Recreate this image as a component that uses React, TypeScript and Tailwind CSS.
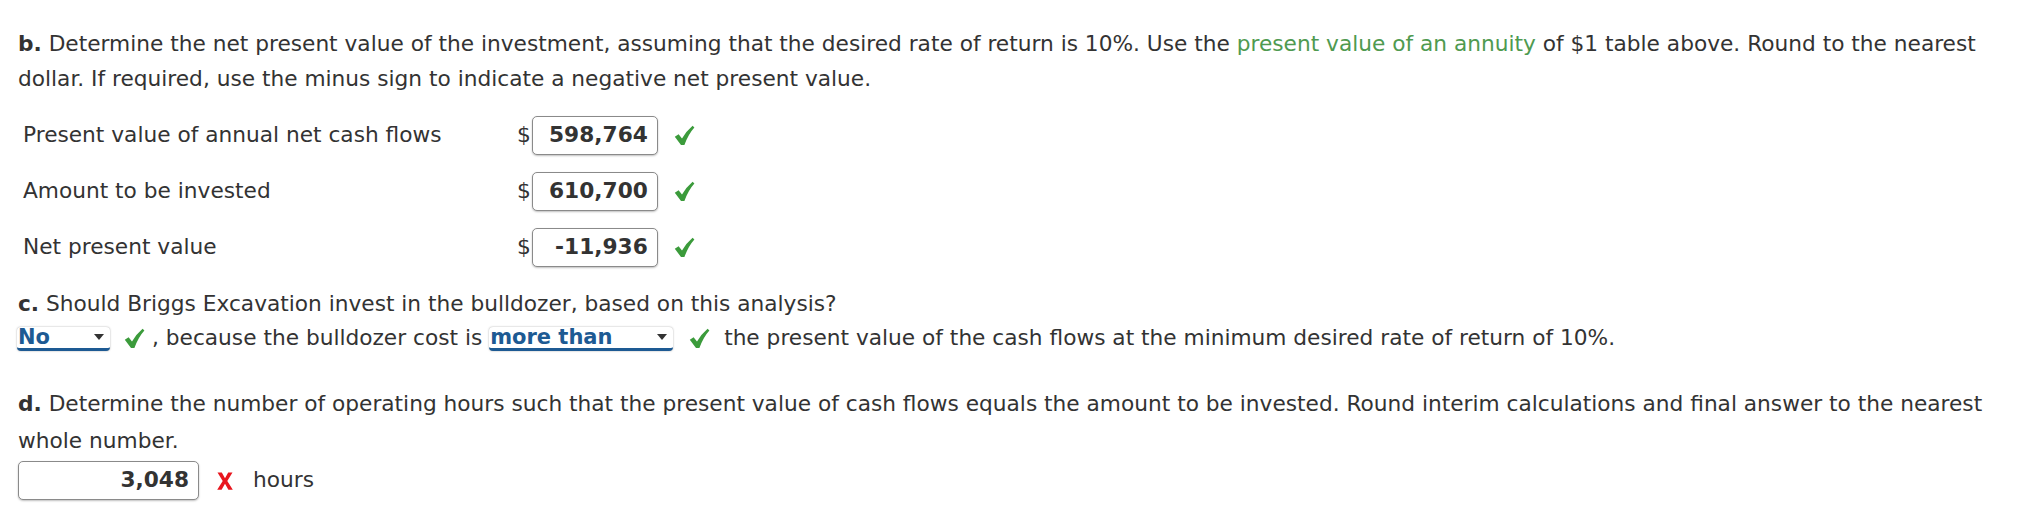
import React from "react";

const font = { fontFamily: '"DejaVu Sans", Verdana, sans-serif' };

const Check = () => (
  <svg width="21" height="21" viewBox="0 0 21 21" className="shrink-0">
    <path
      d="M0.8 11.8 L4.6 9.2 L8 13.6 Q12.2 6.2 18.6 0.8 L20.4 2.4 Q14.2 9.2 10.4 20 L7 20 Z"
      fill="#3b9b3b"
    />
  </svg>
);

const Cross = () => (
  <svg width="18" height="20" viewBox="0 0 18 20" className="shrink-0">
    <path
      d="M1.5 1.5 L5.8 1.5 L9 7.2 L12.2 1.5 L16.5 1.5 L11.3 10 L16.8 18.8 L12.4 18.8 L9 12.8 L5.6 18.8 L1.2 18.8 L6.7 10 Z"
      fill="#e8161e"
    />
  </svg>
);

const rows = [
  { label: "Present value of annual net cash flows", value: "598,764" },
  { label: "Amount to be invested", value: "610,700" },
  { label: "Net present value", value: "-11,936" },
];

const Select = ({ value, width }: { value: string; width: string }) => (
  <span
    className={`relative inline-flex items-center h-[24px] ${width} bg-white rounded-[4px] border-b-[3px] border-[#1d5a93] shadow-[0_0_2px_rgba(0,0,0,0.35)] pl-[1px] pr-[6px]`}
  >
    <span className="font-bold text-[#1d5a93] text-[21px] leading-none">{value}</span>
    <svg width="10" height="6" viewBox="0 0 10 6" className="ml-auto">
      <path d="M0 0 L10 0 L5 6 Z" fill="#333" />
    </svg>
  </span>
);

export default function App() {
  return (
    <div className="w-[2030px] h-[522px] bg-white text-[#333] text-[21.7px] pl-[18px] pt-[26px]" style={font}>
      <p className="leading-[35px]">
        <b>b.</b> Determine the net present value of the investment, assuming that the desired rate of return is
        10%. Use the <span className="text-[#4f9a50]">present value of an annuity</span> of $1 table above. Round to
        the nearest dollar. If required, use the minus sign to indicate a negative net present value.
      </p>

      <div className="mt-[11px] pl-[5px]">
        {rows.map((r) => (
          <div key={r.label} className="flex items-center h-[56px]">
            <span className="w-[494px]">{r.label}</span>
            <span>$</span>
            <span className="ml-[1px] w-[126px] h-[39px] flex items-center justify-end pr-[9px] bg-white border border-[#8a8a8a] rounded-[5px] shadow-[0_1px_2px_rgba(0,0,0,0.25)] font-bold">
              {r.value}
            </span>
            <span className="ml-[16px]">
              <Check />
            </span>
          </div>
        ))}
      </div>

      <p className="mt-[11px] leading-[35px]">
        <b>c.</b> Should Briggs Excavation invest in the bulldozer, based on this analysis?
      </p>
      <div className="flex items-center h-[35px] -ml-[1px]">
        <Select value="No" width="w-[93px]" />
        <span className="ml-[14px]">
          <Check />
        </span>
        <span className="ml-[7px] whitespace-pre">, because the bulldozer cost is </span>
        <Select value="more than" width="w-[184px]" />
        <span className="ml-[16px]">
          <Check />
        </span>
        <span className="ml-[14px]">
          the present value of the cash flows at the minimum desired rate of return of 10%.
        </span>
      </div>

      <p className="mt-[29px] leading-[37px]">
        <b>d.</b> Determine the number of operating hours such that the present value of cash flows equals the
        amount to be invested. Round interim calculations and final answer to the nearest whole number.
      </p>
      <div className="flex items-center mt-[2px]">
        <span className="w-[181px] h-[39px] flex items-center justify-end pr-[9px] bg-white border border-[#8a8a8a] rounded-[5px] shadow-[0_1px_2px_rgba(0,0,0,0.25)] font-bold">
          3,048
        </span>
        <span className="ml-[17px]">
          <Cross />
        </span>
        <span className="ml-[19px]">hours</span>
      </div>
    </div>
  );
}
